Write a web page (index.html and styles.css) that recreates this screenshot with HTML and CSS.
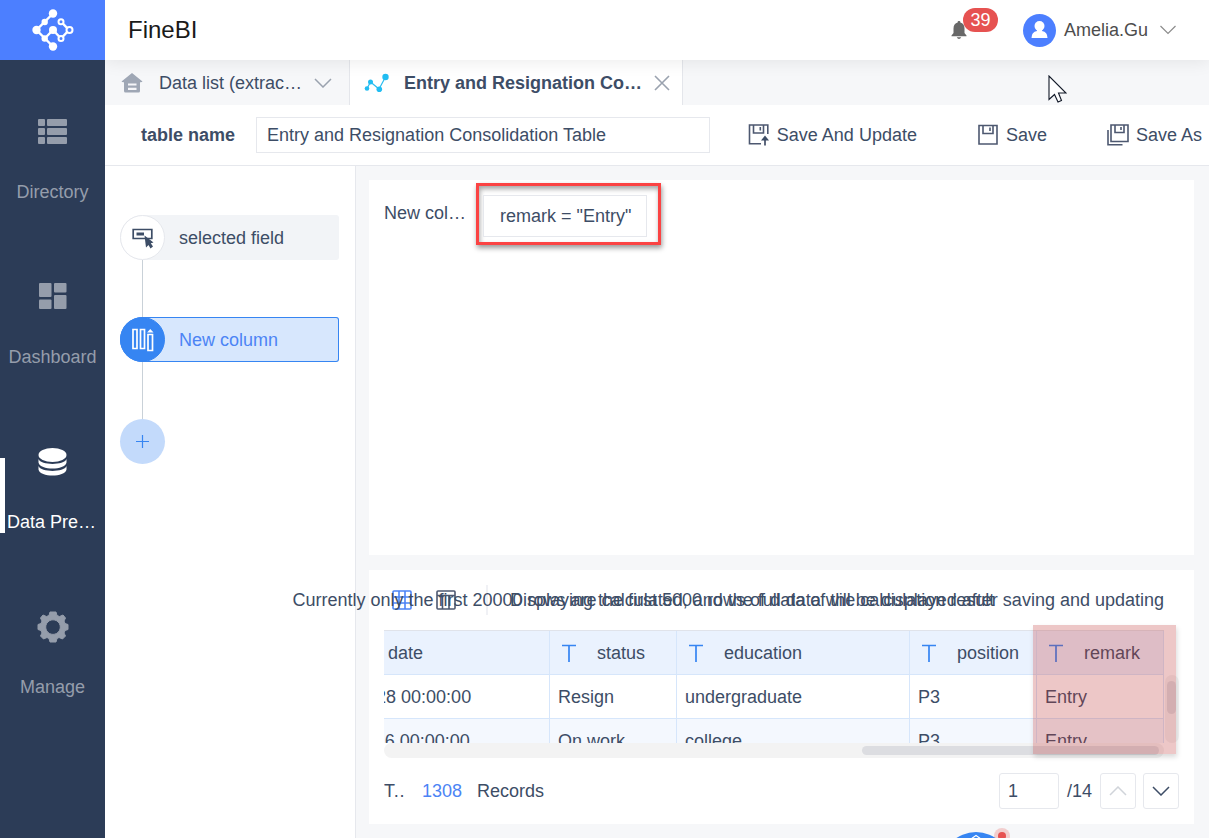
FILE: index.html
```html
<!DOCTYPE html>
<html lang="en">
<head>
<meta charset="utf-8">
<title>FineBI</title>
<link rel="stylesheet" href="styles.css">
</head>
<body>
<div class="app">
  <nav class="sidebar" aria-label="Main">
    <a class="logo" href="#" aria-label="FineBI home">
      <svg width="42" height="42" viewBox="0 0 42 42" fill="none" stroke="#fff" stroke-width="2">
        <path d="M21 4.500L4.500 21L21 37.500M12.700 29.500L21 21L29 29.500L37 21L29 12.700" stroke-width="2.400"/>
        <g fill="#fff" stroke="none"><circle cx="21" cy="4.500" r="4.200"/><circle cx="12.700" cy="13" r="3.200"/><circle cx="4.500" cy="21" r="4.200"/><circle cx="12.700" cy="29.500" r="3.200"/><circle cx="21" cy="37.500" r="4.200"/><circle cx="21" cy="21" r="4"/></g>
        <g fill="#4c7fff"><circle cx="29" cy="12.700" r="2.500"/><circle cx="37.500" cy="21" r="3"/><circle cx="29" cy="29.500" r="2.500"/></g>
      </svg>
    </a>
    <a class="nav-item" href="#">
      <svg width="30" height="30" viewBox="1 0 30 30" fill="currentColor"><rect x="1" y="2" width="7" height="7" rx="1"/><rect x="10" y="2" width="20" height="7" rx="1"/><rect x="1" y="11" width="7" height="7" rx="1"/><rect x="10" y="11" width="20" height="7" rx="1"/><rect x="1" y="20" width="7" height="7" rx="1"/><rect x="10" y="20" width="20" height="7" rx="1"/></svg>
      <span>Directory</span>
    </a>
    <a class="nav-item" href="#">
      <svg width="30" height="30" viewBox="1 0 30 30" fill="currentColor"><rect x="2" y="1" width="12.500" height="14" rx="1"/><rect x="2" y="17.500" width="12.500" height="9.500" rx="1"/><rect x="17" y="1" width="12.500" height="9.500" rx="1"/><rect x="17" y="13" width="12.500" height="14" rx="1"/></svg>
      <span>Dashboard</span>
    </a>
    <a class="nav-item active" href="#" aria-current="page">
      <svg width="30" height="30" viewBox="1 0 30 30" fill="currentColor"><ellipse cx="15.500" cy="8" rx="14" ry="7"/><path d="M1.500 12C4 18.500 27 18.500 29.500 12V15.500C28 23.500 3 23.500 1.500 15.500Z"/><path d="M1.500 19C4 25.500 27 25.500 29.500 19V22.500C28 30.500 3 30.500 1.500 22.500Z"/></svg>
      <span>Data Preparation</span>
    </a>
    <a class="nav-item" href="#">
      <svg width="32" height="32" viewBox="0 0 32 32"><path fill="currentColor" fill-rule="evenodd" stroke="currentColor" stroke-linejoin="round" d="M13 1H19L20 4.500L22.500 5.500L26 4L28.500 7L27 10L28 12.500L31 13.500V18.500L28 19.500L27 22L28.500 25L25.500 28L22 26.500L20 27.500L19 31H13L12 27.500L10 26.500L6.500 28L3.500 25L5 22L4 19.500L1 18.500V13.500L4 12.500L5 10L3.500 7L6 4L9.500 5.500L12 4.500ZM16 8.800a7.300 7.300 0 1 0 .01 0Z"/></svg>
      <span>Manage</span>
    </a>
  </nav>

  <div class="main">
    <header class="header">
      <h1>FineBI</h1>
      <button class="bell" type="button" aria-label="Notifications">
        <svg width="16" height="18" viewBox="0 0 16 18" fill="#686868"><path d="M8 0a1.300 1.300 0 0 1 1.300 1.600C12 2.200 13.500 4.500 13.500 7.500V12L15.500 14.500V15.300H.5V14.500L2.500 12V7.500C2.500 4.500 4 2.200 6.700 1.600A1.300 1.300 0 0 1 8 0ZM5.800 16.200H10.200Q9.500 18 8 18T5.800 16.200Z"/></svg>
        <span class="badge">39</span>
      </button>
      <button class="user" type="button">
        <svg width="33" height="33" viewBox="0 0 33 33"><circle cx="16.500" cy="16.500" r="16.500" fill="#4c7fff"/><circle cx="16.500" cy="12" r="5" fill="#fff"/><path fill="#fff" d="M13.500 15H19.500L19 17Q24.500 18 24.500 24H8.500Q8.500 18 14 17Z"/></svg>
        <span>Amelia.Gu</span>
        <svg width="16" height="10" viewBox="0 0 16 10" fill="none" stroke="#8c8c8c" stroke-width="1.200"><path d="M.5 1L8 8.500L15.500 1"/></svg>
      </button>
    </header>

    <div class="tabs">
      <a class="tab tab-list" href="#">
        <svg width="22" height="20" viewBox="0 0 22 20"><path fill="#9fa7b5" d="M11 0L21.500 8.500Q21 9.500 19 9.300V18Q19 19.500 17.500 19.500H4.500Q3 19.500 3 18V9.300Q1 9.500 .5 8.500Z"/><path d="M7 11.500H15.500M7 15.800H15.500" stroke="#f5f6f9" stroke-width="2.200"/></svg>
        <span>Data list (extracted data)</span>
        <svg width="18" height="10" viewBox="0 0 18 10" fill="none" stroke="#9aa2af" stroke-width="1.500"><path d="M1 1L9 9L17 1"/></svg>
      </a>
      <a class="tab tab-current" href="#">
        <svg width="26" height="20" viewBox="0 0 26 20"><path d="M3 15.500L6.500 9L15 16L21.500 4" fill="none" stroke="#2bbdf0" stroke-width="1.200"/><g fill="#22bdf2"><circle cx="3" cy="15.500" r="2.300"/><circle cx="6.500" cy="9" r="2.500"/><circle cx="15.300" cy="16.300" r="2.800"/><circle cx="21.500" cy="4" r="3.200"/></g></svg>
        <span>Entry and Resignation Consolidation Table</span>
        <svg width="16" height="16" viewBox="0 0 16 16" stroke="#9aa2af" stroke-width="1.600"><path d="M1 1L15 15M15 1L1 15"/></svg>
      </a>
    </div>

    <form class="toolbar">
      <label for="table-name">table name</label>
      <input id="table-name" type="text" value="Entry and Resignation Consolidation Table">
      <div class="actions">
        <button type="button">
          <svg width="22" height="22" viewBox="0 0 22 22" fill="none" stroke="#4d5870" stroke-width="1.600"><path d="M13 19.800H1.500V1H19.800V10M5.500 1V9H15.500V1M12.300 3V6.500"/><path d="M17 21.500V13" stroke-width="1.800"/><path d="M13 16.500L17 11.500L21 16.500Z" fill="#3d4d66" stroke="none"/></svg>
          <span>Save And Update</span>
        </button>
        <button type="button">
          <svg width="22" height="22" viewBox="0 0 22 22" fill="none" stroke="#4d5870" stroke-width="1.600"><path d="M2 1.500H20V20H2ZM6 1.500V9.500H16V1.500M13 3.500V7"/></svg>
          <span>Save</span>
        </button>
        <button type="button">
          <svg width="22" height="22" viewBox="0 0 22 22" fill="none" stroke="#4d5870" stroke-width="1.600"><path d="M4 1H21V17.500H4ZM8 1V8.500H17V1M14 3V6M1 6V20.800H15.500"/></svg>
          <span>Save As</span>
        </button>
      </div>
    </form>

    <div class="workspace">
      <aside class="steps">
        <button class="step" type="button">
          <span class="disc">
            <svg width="22" height="22" viewBox="0 0 22 22"><path d="M1.200 2.500H19.800V11.500H1.200Z" fill="none" stroke="#3d4d66" stroke-width="1.700"/><path d="M4.500 7H12" stroke="#3d4d66" stroke-width="3"/><path d="M12.500 8.500L21.500 15.500L18.800 16.200L21 19.500L18.500 21.500L16.500 18L14 20.500Z" fill="#3d4d66"/></svg>
          </span>
          <span class="step-label">selected field</span>
        </button>
        <button class="step current" type="button">
          <span class="disc">
            <svg width="24" height="24" viewBox="0 0 24 24" fill="none" stroke="#fff" stroke-width="1.700"><path d="M2 1.500H6V20.500H2ZM9.500 1.500H13.500V20.500H9.500ZM17 6.500H21.500V22.500H17Z"/><path d="M16 4.500H22.500L19.300 1Z" fill="#fff" stroke="none"/></svg>
          </span>
          <span class="step-label">New column</span>
        </button>
        <button class="add-step" type="button" aria-label="Add step">
          <svg width="13" height="13" viewBox="0 0 13 13" stroke="#3685f2" stroke-width="1.200"><path d="M6.500 0V13M0 6.500H13"/></svg>
        </button>
      </aside>

      <main class="content">
        <section class="panel formula-panel">
          <span class="formula-label">New column</span>
          <div class="formula-mark"><button class="formula" type="button">remark = "Entry"</button></div>
        </section>

        <section class="panel preview">
          <div class="preview-bar">
            <button type="button" aria-label="Grid view"><svg width="20" height="20" viewBox="0 0 20 20" fill="none" stroke="#4c84f5" stroke-width="1.600"><rect x="1" y="1" width="18" height="18" rx="1"/><path d="M7 1V19M13 1V19M1 7H19M1 13H19"/></svg></button>
            <button type="button" aria-label="Field view"><svg width="20" height="20" viewBox="0 0 20 20" fill="none" stroke="#4d5870" stroke-width="1.600"><rect x="1" y="1" width="18" height="18" rx="1"/><path d="M1 5.500H19M6.500 5.500V19M13 5.500V19"/></svg></button>
            <span class="divider"></span>
            <span class="note">Displaying the first 5000 rows of data of the calculation result</span>
            <span class="note note-limit">Currently only the first 20000 rows are calculated, and the full data will be displayed after saving and updating</span>
          </div>

          <div class="grid-area">
            <div class="grid-view">
              <table>
                <colgroup><col class="c-date"><col class="c-text"><col><col class="c-text"><col class="c-text"></colgroup>
                <thead><tr>
                  <th><span class="th"><svg width="14" height="18" viewBox="0 0 14 18" fill="none" stroke="#3685f2" stroke-width="1.500"><rect x="1" y="2" width="12" height="14"/></svg>entry date</span></th>
                  <th><span class="th"><svg class="type" width="14" height="18" viewBox="0 0 14 18"><path d="M0 1.500H14M7 1.500V18"/></svg>status</span></th>
                  <th><span class="th"><svg class="type" width="14" height="18" viewBox="0 0 14 18"><path d="M0 1.500H14M7 1.500V18"/></svg>education</span></th>
                  <th><span class="th"><svg class="type" width="14" height="18" viewBox="0 0 14 18"><path d="M0 1.500H14M7 1.500V18"/></svg>position</span></th>
                  <th><span class="th"><svg class="type" width="14" height="18" viewBox="0 0 14 18"><path d="M0 1.500H14M7 1.500V18"/></svg>remark</span></th>
                </tr></thead>
                <tbody>
                  <tr><td>2018-01-28 00:00:00</td><td>Resign</td><td>undergraduate</td><td>P3</td><td>Entry</td></tr>
                  <tr><td>2018-11-16 00:00:00</td><td>On work</td><td>college</td><td>P3</td><td>Entry</td></tr>
                </tbody>
              </table>
            </div>
            <div class="hbar"><span></span></div>
            <div class="vbar"><span></span></div>
            <div class="column-mark"></div>
          </div>

          <div class="pager">
            <span class="total">Total</span>
            <span class="count">1308</span>
            <span>Records</span>
            <input type="text" value="1" aria-label="Page">
            <span class="pages">/14</span>
            <button type="button" aria-label="Previous page" disabled><svg width="18" height="10" viewBox="0 0 18 10" fill="none" stroke="#d0d4da" stroke-width="1.500"><path d="M1 9L9 1L17 9"/></svg></button>
            <button type="button" aria-label="Next page"><svg width="18" height="10" viewBox="0 0 18 10" fill="none" stroke="#3d4d66" stroke-width="1.500"><path d="M1 1L9 9L17 1"/></svg></button>
          </div>
        </section>
      </main>
    </div>
  </div>

  <button class="helper" type="button" aria-label="Assistant">
    <svg width="70" height="70" viewBox="0 0 70 70"><circle cx="35" cy="35" r="35" fill="#3685f2"/><path d="M30 7L35 3.500L40 7" fill="none" stroke="#fff" stroke-width="1.200"/></svg>
    <span class="dot"></span>
  </button>
  <svg class="pointer" width="19" height="28" viewBox="0 0 19 28"><path d="M1 1V24.500L6.500 19.500L10 27L13.500 25.500L10.500 18H18Z" fill="#fff" stroke="#111827" stroke-width="1.100"/></svg>
</div>
</body>
</html>
```
FILE: styles.css
```css
* { box-sizing: border-box; }

body {
  margin: 0;
  color: #3d4d66;
  font: 18px/24px "Liberation Sans", Arial, sans-serif;
}

a { color: inherit; text-decoration: none; }

button, input { font: inherit; color: inherit; }

button { padding: 0; border: 0; background: none; }

svg { display: block; flex: none; }

.app {
  position: relative;
  display: flex;
  height: 100vh;
  overflow: hidden;
}

/* Sidebar */
.sidebar {
  flex: none;
  width: 105px;
  background: #2c3c57;
}

.logo {
  display: flex;
  align-items: center;
  justify-content: center;
  height: 60px;
  background: #4c7fff;
}

.nav-item {
  position: relative;
  display: flex;
  flex-direction: column;
  align-items: center;
  height: 165px;
  padding: 56px 7px 0;
  color: #959dab;
}

.nav-item svg { height: 32px; }

.nav-item span {
  max-width: 100%;
  margin-top: 32px;
  overflow: hidden;
  text-overflow: ellipsis;
  white-space: nowrap;
}

.nav-item.active { color: #fff; }

.nav-item.active::before {
  content: "";
  position: absolute;
  left: 0;
  top: 68px;
  width: 5px;
  height: 75px;
  background: #fff;
}

/* Header */
.main {
  display: flex;
  flex: 1;
  flex-direction: column;
  min-width: 0;
}

.header {
  position: relative;
  z-index: 1;
  display: flex;
  flex: none;
  align-items: center;
  height: 60px;
  padding: 0 33px 0 23px;
  background: #fff;
  box-shadow: 0 2px 16px rgba(0, 0, 0, .08);
  clip-path: inset(0 0 -24px 0);
}

.header h1 {
  margin: 0 auto 0 0;
  color: #1a1a1a;
  font-size: 24px;
  font-weight: 400;
}

.bell { position: relative; margin-right: 56px; }

.badge {
  position: absolute;
  left: 12px;
  top: -13px;
  width: 35px;
  border-radius: 12px;
  background: #e65251;
  color: #fff;
}

.user {
  display: flex;
  align-items: center;
  gap: 8px;
  color: #4d4d4d;
}

.user svg:last-child { margin-left: 4px; }

/* Tabs */
.tabs {
  display: flex;
  flex: none;
  height: 45px;
  background: #f6f7f9;
}

.tab {
  display: flex;
  align-items: center;
  border-right: 1px solid #e4e6eb;
}

.tab span {
  flex: 1;
  overflow: hidden;
  text-overflow: ellipsis;
  white-space: nowrap;
}

.tab-list { width: 245px; padding: 0 17px 0 16px; }

.tab-list span { margin: 0 8px 0 16px; }

.tab-current {
  width: 333px;
  padding: 0 12px 0 14px;
  background: #fff;
  font-weight: 700;
}

.tab-current span { margin: 0 8px 0 14px; }

/* Toolbar */
.toolbar {
  display: flex;
  flex: none;
  align-items: center;
  height: 61px;
  padding: 0 7px 0 36px;
  border-bottom: 1px solid #e6e8ed;
}

.toolbar label { margin-right: 21px; font-weight: 700; }

.toolbar input {
  flex: 1;
  min-width: 0;
  height: 36px;
  padding: 0 10px;
  border: 1px solid #e6e8ed;
}

.actions { display: flex; gap: 60px; margin-left: 38px; }

.actions button { display: flex; align-items: center; gap: 7px; white-space: nowrap; }

/* Steps */
.workspace { display: flex; flex: 1; min-height: 0; }

.steps {
  display: flex;
  flex: none;
  flex-direction: column;
  align-items: stretch;
  width: 251px;
  padding: 49px 16px 0 15px;
  border-right: 1px solid #e6e8ed;
}

.step {
  position: relative;
  display: flex;
  align-items: center;
  height: 45px;
  margin-bottom: 57px;
  border-radius: 23px 3px 3px 23px;
  background: #f2f4f7;
}

.step::after {
  content: "";
  position: absolute;
  left: 22px;
  top: 45px;
  width: 1px;
  height: 57px;
  background: #c9d1d8;
}

.disc {
  display: flex;
  flex: none;
  align-items: center;
  justify-content: center;
  width: 45px;
  height: 45px;
  border: 1px solid #e6e8ed;
  border-radius: 50%;
  background: #fff;
}

.step-label { margin-left: 14px; }

.step.current {
  background: #d7e7fd;
  box-shadow: inset 0 0 0 1px #3685f2;
  color: #4c84f5;
}

.current .disc { border-color: #3685f2; background: #3685f2; }

.add-step {
  display: flex;
  align-items: center;
  justify-content: center;
  width: 45px;
  height: 45px;
  border-radius: 50%;
  background: #c3dafb;
}

/* Content */
.content {
  display: flex;
  flex: 1;
  flex-direction: column;
  gap: 15px;
  min-width: 0;
  padding: 14px 15px 14px 13px;
  background: #f6f7f9;
}

.panel { background: #fff; }

.formula-panel {
  display: flex;
  flex: 1;
  align-items: flex-start;
  padding: 3px 15px;
}

.formula-label {
  width: 88px;
  margin: 18px 4px 0 0;
  overflow: hidden;
  text-overflow: ellipsis;
  white-space: nowrap;
}

.formula-mark {
  padding: 9px 11px 5px 4px;
  border: 3px solid #fb4343;
  box-shadow: 1px 3px 5px rgba(0, 0, 0, .4), inset 1px 3px 5px rgba(0, 0, 0, .35);
}

.formula {
  height: 42px;
  padding: 0 15px 0 16px;
  border: 1px solid #e6e8ed;
  background: #fff;
}

.preview { padding: 15px; }

.preview-bar {
  position: relative;
  display: flex;
  align-items: center;
  height: 30px;
  margin-right: 15px;
  padding-left: 8px;
}

.preview-bar button { margin-right: 24px; }

.divider { width: 2px; height: 30px; margin-left: 6px; background: #f0f1f5; }

.note { margin-left: 22px; white-space: nowrap; }

.note-limit { position: absolute; right: 0; top: 3px; }

.grid-area { position: relative; margin: 15px 15px 0 0; }

.grid-view {
  height: 113px;
  overflow: hidden;
  border-top: 1px solid #e0e3ea;
}

table {
  width: calc(100% + 88px);
  margin-left: -88px;
  border-spacing: 0;
  table-layout: fixed;
}

.c-date { width: 254px; }

.c-text { width: 127px; }

th, td {
  height: 44px;
  padding: 0 8px;
  border: solid #d6e6fb;
  border-width: 0 1px 1px 0;
  font-weight: 400;
  text-align: left;
  white-space: nowrap;
}

th { background: #eaf2fe; }

tbody tr:nth-child(even) { background: #f4f8fe; }

.th { display: flex; align-items: center; gap: 21px; padding-left: 4px; }

.type { fill: none; stroke: #3685f2; stroke-width: 1.700; }

/* Scroll tracks */
.hbar {
  height: 15px;
  padding: 3px 5px;
  border-radius: 8px;
  background: #f3f3f3;
}

.hbar span {
  display: block;
  width: 297px;
  height: 9px;
  margin-left: auto;
  border-radius: 5px;
  background: #dcdde1;
}

.vbar {
  position: absolute;
  right: -15px;
  top: 45px;
  width: 14px;
  height: 68px;
  padding: 6px 3px 0 2px;
  border-radius: 8px;
  background: #f3f3f3;
}

.vbar span { display: block; height: 33px; border-radius: 5px; background: #dcdde1; }

.column-mark {
  position: absolute;
  right: -12px;
  top: -5px;
  width: 143px;
  height: 129px;
  background: rgba(190, 55, 55, .28);
  box-shadow: 1px 3px 5px rgba(0, 0, 0, .15);
}

/* Pager */
.pager { display: flex; align-items: center; height: 36px; margin-top: 15px; }

.total { width: 22px; overflow: hidden; text-overflow: ellipsis; white-space: nowrap; }

.count { margin: 0 15px 0 16px; color: #4c84f5; }

.pager input {
  width: 60px;
  height: 36px;
  margin-left: auto;
  padding: 0 8px;
  border: 1px solid #e6e8ed;
  border-radius: 3px;
}

.pages { margin: 0 1px 0 8px; }

.pager button {
  display: flex;
  align-items: center;
  justify-content: center;
  width: 36px;
  height: 36px;
  margin-left: 7px;
  border: 1px solid #e6e8ed;
  border-radius: 3px;
}

/* Floating assistant and pointer */
.helper { position: absolute; right: 198px; bottom: -64px; }

.dot {
  position: absolute;
  right: 5px;
  top: 0;
  width: 8px;
  height: 8px;
  border-radius: 50%;
  background: #e65251;
  box-shadow: 0 0 0 4px rgba(230, 82, 81, .25);
}

.pointer { position: absolute; left: 1048px; top: 75px; z-index: 2; }
```
